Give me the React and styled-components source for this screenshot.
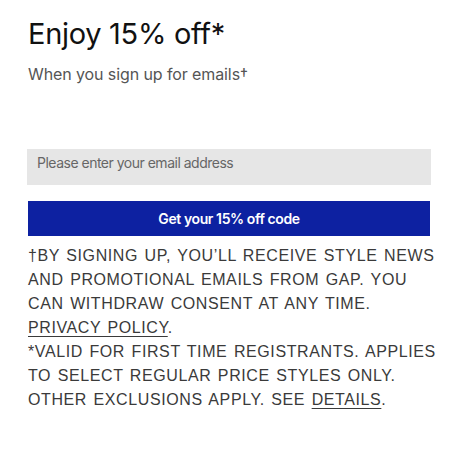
import React from "react";
import styled, { createGlobalStyle } from "styled-components";

const Global = createGlobalStyle`
  html, body { margin: 0; padding: 0; background: #fff; }
  body { font-family: Inter, "Liberation Sans", sans-serif; }
`;

const Panel = styled.div`
  width: 453px;
  box-sizing: border-box;
  padding: 14px 16px 0 28px;
`;

const Title = styled.h1`
  margin: 0;
  font-family: Inter, sans-serif;
  font-weight: 400;
  font-size: 29px;
  line-height: 40px;
  letter-spacing: -0.3px;
  color: #111;
`;

const Subtitle = styled.p`
  margin: 10px 0 0;
  font-family: Inter, sans-serif;
  font-size: 16px;
  line-height: 20px;
  color: #555;
  letter-spacing: -0.1px;
`;

const EmailInput = styled.input`
  display: block;
  box-sizing: border-box;
  width: 404px;
  height: 36px;
  margin: 65px 0 0 -1px;
  padding: 0 10px 10px;
  border: none;
  outline: none;
  background: #e6e6e6;
  font-family: Inter, sans-serif;
  font-size: 14px;
  letter-spacing: -0.5px;
  color: #333;
  &::placeholder { color: #666; }
`;

const SubmitButton = styled.button`
  display: block;
  width: 402px;
  height: 35px;
  margin: 16px 0 0;
  padding: 0;
  border: none;
  background: #0d21a1;
  color: #fff;
  font-family: Inter, sans-serif;
  font-weight: 600;
  font-size: 14px;
  letter-spacing: -0.4px;
  cursor: pointer;
`;

const Legal = styled.div`
  width: 408px;
  margin-top: 8px;
  font-family: "Liberation Sans", Arial, sans-serif;
  font-size: 16px;
  line-height: 24px;
  letter-spacing: 0.6px;
  word-spacing: 1.5px;
  text-transform: uppercase;
  color: #3a3a3a;
`;

const Link = styled.a`
  color: inherit;
  text-decoration: underline;
  text-underline-offset: 3px;
`;

export default function App() {
  return (
    <>
      <Global />
      <Panel>
        <Title>Enjoy 15% off*</Title>
        <Subtitle>When you sign up for emails†</Subtitle>
        <EmailInput placeholder="Please enter your email address" />
        <SubmitButton>Get your 15% off code</SubmitButton>
        <Legal>
          †By signing up, you’ll receive style news and promotional emails from Gap. You can withdraw consent at any time.{" "}
          <Link href="#">Privacy Policy</Link>.
          <br />
          *Valid for first time registrants. Applies to select regular price styles only. Other exclusions apply. See{" "}
          <Link href="#">Details</Link>.
        </Legal>
      </Panel>
    </>
  );
}
